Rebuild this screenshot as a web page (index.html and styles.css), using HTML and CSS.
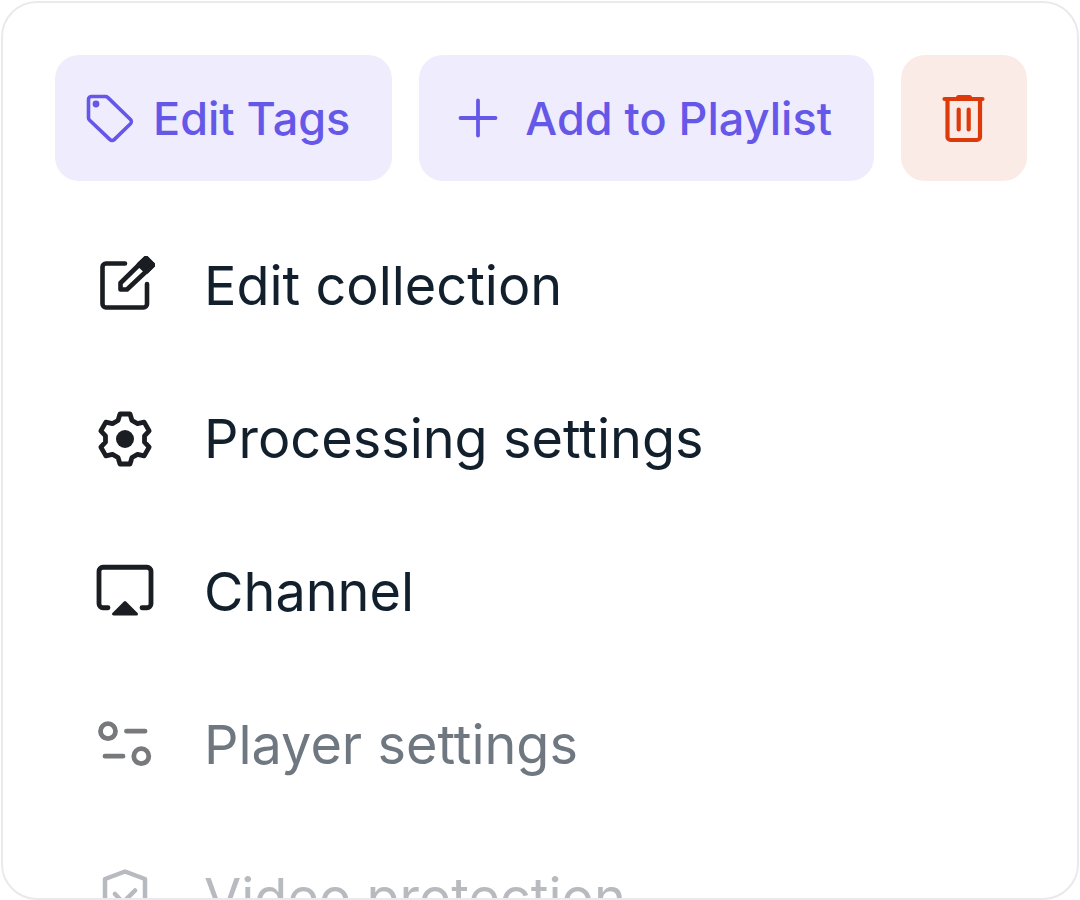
FILE: index.html
```html
<!DOCTYPE html>
<html lang="en">
<head>
    <meta charset="UTF-8">
    <meta name="viewport" content="width=device-width, initial-scale=1.0">
    <title>Collection menu</title>
    <link rel="stylesheet" href="styles.css">
</head>
<body>
    <div class="card">
        <div class="actions">
            <button class="action-btn" type="button">
                <svg class="tag-icon" viewBox="0 0 50 50" fill="none" stroke="currentColor" stroke-width="3.6" stroke-linejoin="round">
                    <path d="M3.500 6.500a3 3 0 0 1 3-3h14a3 3 0 0 1 2.200.9l22.800 22.100a3 3 0 0 1 0 4.200L29.200 46.600a3 3 0 0 1-4.200 0L4.400 27a3 3 0 0 1-.9-2.100z"/>
                    <circle cx="11" cy="11" r="3.400" fill="currentColor" stroke="none"/>
                </svg>
                Edit Tags
            </button>
            <button class="action-btn" type="button">
                <svg class="plus-icon" viewBox="0 0 58 58" fill="none" stroke="currentColor" stroke-width="3.800" stroke-linecap="round">
                    <path d="M29 11.500V46.500M11.500 29H46.500"/>
                </svg>
                Add to Playlist
            </button>
            <button class="delete-btn" type="button" aria-label="Delete">
                <svg class="trash-icon" viewBox="0 0 50 50" fill="none" stroke="currentColor" stroke-width="4.200" stroke-linecap="round" stroke-linejoin="round">
                    <path d="M5.500 6H43.500"/>
                    <rect x="17" y="2" width="16" height="5" rx="2.500" fill="currentColor" stroke="none"/>
                    <path d="M8.500 6V44a3 3 0 0 0 3 3H38a3 3 0 0 0 3-3V6"/>
                    <path d="M19.700 16.500V36.500M29.700 16.500V36.500"/>
                </svg>
            </button>
        </div>

        <ul class="menu">
            <li class="menu-item">
                <svg class="menu-icon" viewBox="0 0 60 60" fill="none" stroke="currentColor" stroke-width="4.600" stroke-linecap="round" stroke-linejoin="round">
                    <path d="M30 7.500H11a3.500 3.500 0 0 0-3.500 3.500V48a3.500 3.500 0 0 0 3.500 3.500H48.500A3.500 3.500 0 0 0 52 48V28"/>
                    <path d="M25.500 33.500V27L51 2 58 9 32 33.500Z"/>
                    <path d="M44 8.500 51 2 58 9 51.500 15.500Z" fill="currentColor"/>
                </svg>
                Edit collection
            </li>
            <li class="menu-item">
                <svg class="menu-icon" viewBox="0 0 60 60" fill="none" stroke="currentColor" stroke-width="4.800" stroke-linejoin="round">
                    <path d="M25 5H35L37 11.500 42.520 14.690 49.150 13.170 54.150 21.830 49.520 26.810V33.190L54.150 38.170 49.150 46.830 42.520 45.310 37 48.500 35 55H25L23 48.500 17.480 45.310 10.850 46.830 5.850 38.170 10.480 33.190V26.810L5.850 21.830 10.850 13.170 17.480 14.690 23 11.500Z"/>
                    <circle cx="30" cy="30" r="9" fill="currentColor" stroke="none"/>
                </svg>
                Processing settings
            </li>
            <li class="menu-item">
                <svg class="menu-icon" viewBox="0 0 60 60" fill="none" stroke="currentColor" stroke-width="4.800" stroke-linecap="round" stroke-linejoin="round">
                    <path d="M13 45.750H8a4 4 0 0 1-4-4V9.250a4 4 0 0 1 4-4H52a4 4 0 0 1 4 4V41.750a4 4 0 0 1-4 4H47"/>
                    <path d="M30 40.500 18.500 52H41.500Z" fill="currentColor" stroke-width="3"/>
                </svg>
                Channel
            </li>
            <li class="menu-item menu-item-muted">
                <svg class="menu-icon" viewBox="0 0 60 60" fill="none" stroke="currentColor" stroke-width="4.800" stroke-linecap="round">
                    <circle cx="13" cy="16.200" r="7.500"/>
                    <path d="M31.500 16.200H50M10 41.200H28"/>
                    <circle cx="46.300" cy="41.200" r="7.500"/>
                </svg>
                Player settings
            </li>
            <li class="menu-item menu-item-faded">
                <svg class="menu-icon" viewBox="0 0 60 60" fill="none" stroke="currentColor" stroke-width="4.500" stroke-linecap="round" stroke-linejoin="round">
                    <path d="M30 3.500 50 11V32C50 45 38 52 30 56 22 52 10 45 10 32V11Z"/>
                    <path d="M20 26 28 34.500 40 22.500"/>
                </svg>
                Video protection
            </li>
        </ul>
    </div>
</body>
</html>
```

FILE: styles.css
```css
html, body {
    height: 100%;
}

body {
    margin: 0;
    padding: 1px;
    box-sizing: border-box;
    overflow: hidden;
    background-color: #ffffff;
    font-family: 'Inter', sans-serif;
}

.card {
    height: 899px;
    box-sizing: border-box;
    padding: 52px 50px 0 52px;
    border: 2px solid #eaeaee;
    border-radius: 36px;
    background-color: #ffffff;
    overflow: hidden;
}

.actions {
    display: flex;
    gap: 27px;
}

.action-btn {
    display: flex;
    align-items: center;
    gap: 18px;
    height: 126px;
    padding: 0 42px 0 30px;
    border: none;
    border-radius: 24px;
    background-color: #efecfd;
    color: #6558e8;
    font-family: inherit;
    font-size: 45px;
    font-weight: 500;
    white-space: nowrap;
}

.delete-btn {
    display: flex;
    align-items: center;
    justify-content: center;
    flex: none;
    width: 126px;
    height: 126px;
    padding: 0;
    border: none;
    border-radius: 24px;
    background-color: #fbebe7;
    color: #dc3a0b;
}

.tag-icon,
.trash-icon {
    width: 50px;
    height: 50px;
    flex: none;
}

.plus-icon {
    width: 58px;
    height: 58px;
    flex: none;
}

.menu {
    list-style: none;
    margin: 28px 0 0;
    padding: 0 0 0 40px;
}

.menu-item {
    display: flex;
    align-items: center;
    gap: 49px;
    height: 153px;
    color: #12202d;
    font-size: 54px;
}

.menu-icon {
    width: 60px;
    height: 60px;
    flex: none;
    color: #1a1d21;
}

.menu-item-muted {
    color: #6f7780;
}

.menu-item-muted .menu-icon {
    color: #77797c;
}

.menu-item-faded {
    color: #b7babe;
}

.menu-item-faded .menu-icon {
    color: #b7babe;
}
```
